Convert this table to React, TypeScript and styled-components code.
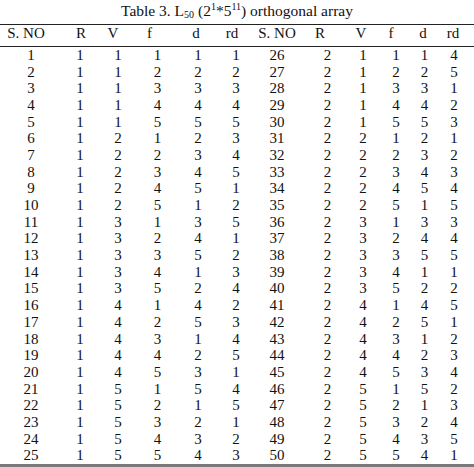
import React from "react";
import styled, { createGlobalStyle } from "styled-components";

const Global = createGlobalStyle`
  html, body { margin: 0; padding: 0; background: #fff; }
  body { font-family: "Liberation Serif", "Times New Roman", serif; color: #111; }
`;

const Page = styled.div`
  width: 474px;
  height: 467px;
  overflow: hidden;
  display: flex;
  flex-direction: column;
`;

const Title = styled.div`
  height: 24px;
  font-size: 15.5px;
  line-height: 21px;
  text-align: center;
  sub { font-size: 10px; vertical-align: -2px; line-height: 0; }
  sup { font-size: 10px; vertical-align: 6px; line-height: 0; }
`;

const Table = styled.div`
  display: flex;
  flex-direction: column;
  border-top: 1px solid #222;
  border-bottom: 3px solid #7a7a7a;
`;

const COLS = "56px 43px 38px 41px 39px 39px 45px 44px 35px 30px 28px 36px";

const HeaderRow = styled.div`
  display: grid;
  grid-template-columns: ${COLS};
  height: 21px;
  line-height: 16px;
  border-bottom: 1px solid #222;
  font-size: 15px;
`;

const Row = styled.div`
  display: grid;
  grid-template-columns: ${COLS};
  height: 16.7px;
  line-height: 16.7px;
  font-size: 15px;
`;

const Cell = styled.div<{ $shift: number }>`
  text-align: center;
  white-space: nowrap;
  padding-left: ${(p) => Math.max(0, 2 * p.$shift)}px;
  padding-right: ${(p) => Math.max(0, -2 * p.$shift)}px;
`;

const HEAD = ["S. NO", "R", "V", "f", "d", "rd", "S. NO", "R", "V", "f", "d", "rd"];
const HEAD_SHIFT = [-2, 3.5, -5, -8, -1.5, -4.5, -1.5, -3, -1.5, -4, -1, -3];
const DATA_SHIFT = [3, 2.5, 0, 0, 0.5, -0.5, -1.5, 4.5, 0.5, 1, 0.5, -2];

const LEFT: number[][] = [
  [1, 1, 1, 1, 1], [1, 1, 2, 2, 2], [1, 1, 3, 3, 3], [1, 1, 4, 4, 4], [1, 1, 5, 5, 5],
  [1, 2, 1, 2, 3], [1, 2, 2, 3, 4], [1, 2, 3, 4, 5], [1, 2, 4, 5, 1], [1, 2, 5, 1, 2],
  [1, 3, 1, 3, 5], [1, 3, 2, 4, 1], [1, 3, 3, 5, 2], [1, 3, 4, 1, 3], [1, 3, 5, 2, 4],
  [1, 4, 1, 4, 2], [1, 4, 2, 5, 3], [1, 4, 3, 1, 4], [1, 4, 4, 2, 5], [1, 4, 5, 3, 1],
  [1, 5, 1, 5, 4], [1, 5, 2, 1, 5], [1, 5, 3, 2, 1], [1, 5, 4, 3, 2], [1, 5, 5, 4, 3],
];

const RIGHT: number[][] = [
  [2, 1, 1, 1, 4], [2, 1, 2, 2, 5], [2, 1, 3, 3, 1], [2, 1, 4, 4, 2], [2, 1, 5, 5, 3],
  [2, 2, 1, 2, 1], [2, 2, 2, 3, 2], [2, 2, 3, 4, 3], [2, 2, 4, 5, 4], [2, 2, 5, 1, 5],
  [2, 3, 1, 3, 3], [2, 3, 2, 4, 4], [2, 3, 3, 5, 5], [2, 3, 4, 1, 1], [2, 3, 5, 2, 2],
  [2, 4, 1, 4, 5], [2, 4, 2, 5, 1], [2, 4, 3, 1, 2], [2, 4, 4, 2, 3], [2, 4, 5, 3, 4],
  [2, 5, 1, 5, 2], [2, 5, 2, 1, 3], [2, 5, 3, 2, 4], [2, 5, 4, 3, 5], [2, 5, 5, 4, 1],
];

export default function App() {
  return (
    <Page>
      <Global />
      <Title>
        Table 3. L<sub>50</sub> (2<sup>1</sup>*5<sup>11</sup>) orthogonal array
      </Title>
      <Table>
        <HeaderRow>
          {HEAD.map((h, i) => (
            <Cell key={i} $shift={HEAD_SHIFT[i]}>{h}</Cell>
          ))}
        </HeaderRow>
        {LEFT.map((l, r) => {
          const vals = [r + 1, ...l, r + 26, ...RIGHT[r]];
          return (
            <Row key={r}>
              {vals.map((v, i) => (
                <Cell key={i} $shift={DATA_SHIFT[i]}>{v}</Cell>
              ))}
            </Row>
          );
        })}
      </Table>
    </Page>
  );
}
